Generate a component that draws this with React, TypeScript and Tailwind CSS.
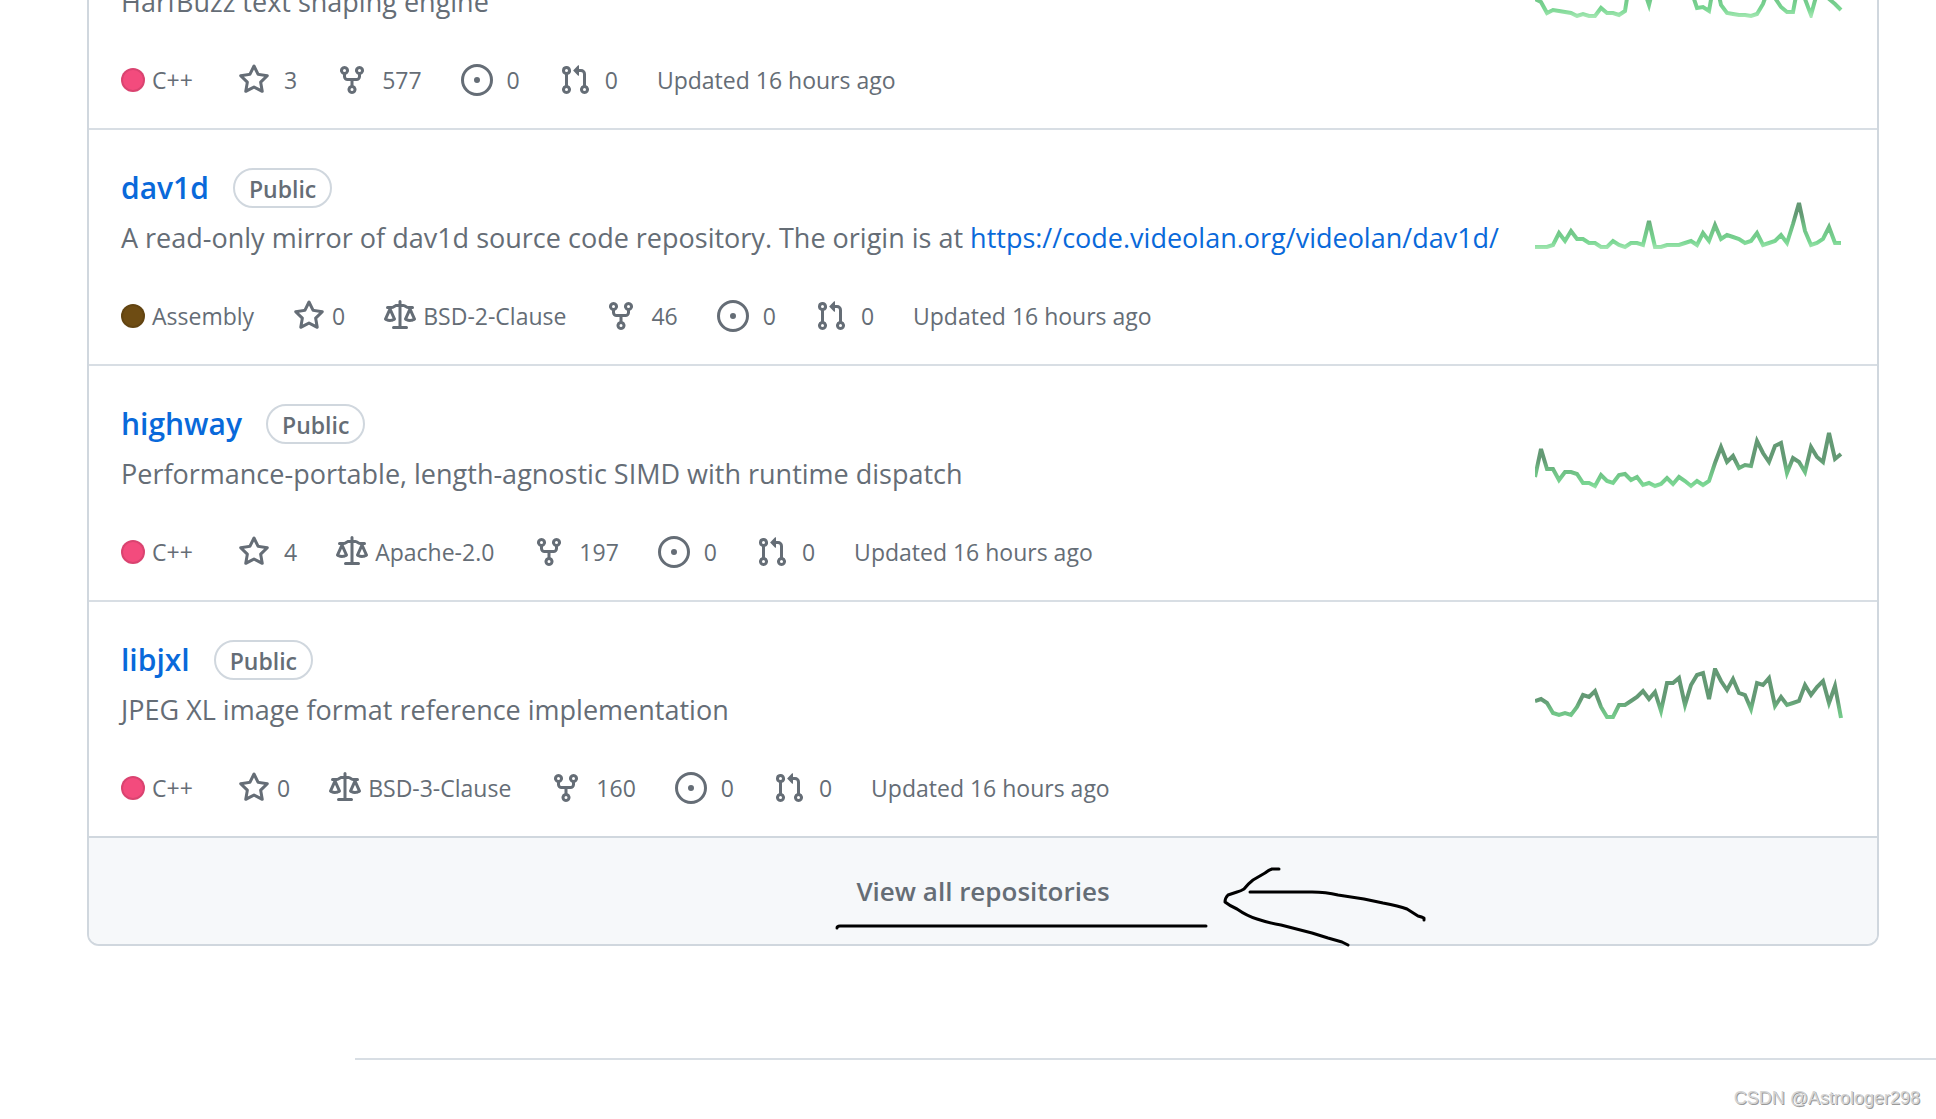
import { clsx } from "clsx";

type Repo = {
  name: string;
  description: string;
  link?: string;
  language: string;
  languageColor: string;
  stars: number;
  wideStars?: boolean;
  license?: string;
  forks: number;
  activity: number[];
  // top and bottom of the sparkline gradient
  shade: [number, number];
};

const repos: Repo[] = [
  {
    name: "harfbuzz",
    description: "HarfBuzz text shaping engine",
    language: "C++",
    languageColor: "bg-[#f34b7d]",
    stars: 3,
    wideStars: true,
    forks: 577,
    activity: [
      39, 42, 53, 50, 51, 52, 53, 56, 54, 56, 56, 48, 53, 53, 55, 51, 13, 20,
      27, 45, 20, 7, 13, 20, 13, 23, 30, 48, 47, 51, 17, 45, 53, 54, 55, 55, 56,
      54, 44, 27, 38, 47, 52, 52, 20, 39, 55, 33, 30, 39, 44, 50,
    ],
    shade: [14, 66],
  },
  {
    name: "dav1d",
    description:
      "A read-only mirror of dav1d source code repository. The origin is at ",
    link: "https://code.videolan.org/videolan/dav1d/",
    language: "Assembly",
    languageColor: "bg-[#6e4c13]",
    stars: 0,
    license: "BSD-2-Clause",
    forks: 46,
    activity: [
      51, 51, 51, 49, 37, 45, 35, 43, 43, 47, 47, 51, 51, 45, 49, 51, 47, 47,
      49, 25, 51, 51, 49, 49, 49, 47, 45, 49, 37, 45, 29, 43, 39, 41, 43, 47,
      45, 37, 49, 47, 45, 39, 47, 28, 7, 35, 49, 47, 43, 31, 47, 47,
    ],
    shade: [14, 61],
  },
  {
    name: "highway",
    description:
      "Performance-portable, length-agnostic SIMD with runtime dispatch",
    language: "C++",
    languageColor: "bg-[#f34b7d]",
    stars: 4,
    wideStars: true,
    license: "Apache-2.0",
    forks: 197,
    activity: [
      45, 17, 37, 37, 48, 40, 40, 42, 51, 51, 54, 43, 49, 51, 43, 42, 48, 45,
      53, 51, 54, 52, 46, 52, 45, 49, 54, 49, 53, 49, 31, 15, 30, 24, 36, 33,
      34, 9, 21, 30, 14, 11, 41, 26, 30, 40, 15, 25, 30, 1, 27, 22,
    ],
    shade: [24, 66],
  },
  {
    name: "libjxl",
    description: "JPEG XL image format reference implementation",
    language: "C++",
    languageColor: "bg-[#f34b7d]",
    stars: 0,
    license: "BSD-3-Clause",
    forks: 160,
    activity: [
      33, 31, 35, 45, 47, 45, 47, 39, 27, 29, 23, 39, 49, 49, 37, 37, 33, 29,
      23, 31, 24, 43, 15, 15, 10, 37, 17, 7, 5, 31, 1, 13, 22, 11, 25, 27, 41,
      15, 17, 10, 38, 29, 37, 35, 33, 17, 27, 19, 13, 35, 18, 50,
    ],
    shade: [28, 68],
  },
];

const icons = {
  star: "M8 .25a.75.75 0 01.673.418l1.882 3.815 4.21.612a.75.75 0 01.416 1.279l-3.046 2.97.719 4.192a.75.75 0 01-1.088.791L8 12.347l-3.766 1.98a.75.75 0 01-1.088-.79l.72-4.194L.818 6.374a.75.75 0 01.416-1.28l4.21-.611L7.327.668A.75.75 0 018 .25zm0 2.445L6.615 5.5a.75.75 0 01-.564.41l-3.097.45 2.24 2.184a.75.75 0 01.216.664l-.528 3.084 2.769-1.456a.75.75 0 01.698 0l2.77 1.456-.53-3.084a.75.75 0 01.216-.664l2.24-2.183-3.096-.45a.75.75 0 01-.564-.41L8 2.694v.001z",
  fork: "M5 3.25a.75.75 0 11-1.5 0 .75.75 0 011.5 0zm0 2.122a2.25 2.25 0 10-1.5 0v.878A2.25 2.25 0 005.75 8.5h1.5v2.128a2.251 2.251 0 101.5 0V8.5h1.5a2.25 2.25 0 002.25-2.25v-.878a2.25 2.25 0 10-1.5 0v.878a.75.75 0 01-.75.75h-4.5A.75.75 0 015 6.25v-.878zm3.75 7.378a.75.75 0 11-1.5 0 .75.75 0 011.5 0zm3-8.75a.75.75 0 100-1.5.75.75 0 000 1.5z",
  issue:
    "M8 9.5a1.5 1.5 0 100-3 1.5 1.5 0 000 3zM8 0a8 8 0 100 16A8 8 0 008 0zM1.5 8a6.5 6.5 0 1113 0 6.5 6.5 0 01-13 0z",
  pull: "M7.177 3.073L9.573.677A.25.25 0 0110 .854v4.792a.25.25 0 01-.427.177L7.177 3.427a.25.25 0 010-.354zM3.75 2.5a.75.75 0 100 1.5.75.75 0 000-1.5zm-2.25.75a2.25 2.25 0 113 2.122v5.256a2.251 2.251 0 11-1.5 0V5.372A2.25 2.25 0 011.5 3.25zM11 2.5h-1V4h1a1 1 0 011 1v5.628a2.251 2.251 0 101.5 0V5A2.5 2.5 0 0011 2.5zm1 10.25a.75.75 0 111.5 0 .75.75 0 01-1.5 0zM3.75 12a.75.75 0 100 1.5.75.75 0 000-1.5z",
  law: "M8.75.75a.75.75 0 00-1.5 0V2h-.984c-.305 0-.604.08-.869.23l-1.288.737A.25.25 0 013.984 3H1.75a.75.75 0 000 1.5h.428L.066 9.192a.75.75 0 00.154.838l.53-.53-.53.53v.001l.002.002.002.002.006.006.016.015.045.04a3.514 3.514 0 00.686.45A4.492 4.492 0 003 11c.88 0 1.556-.22 2.023-.454a3.515 3.515 0 00.686-.45l.045-.04.016-.015.006-.006.002-.002.001-.002L5.25 9.5l.53.53a.75.75 0 00.154-.838L3.822 4.5h.162c.305 0 .604-.08.869-.23l1.289-.737a.25.25 0 01.124-.033h.984V13h-2.5a.75.75 0 000 1.5h6.5a.75.75 0 000-1.5h-2.5V3.5h.984a.25.25 0 01.124.033l1.29.736c.264.152.563.231.868.231h.162l-2.112 4.692a.75.75 0 00.154.838l.53-.53-.53.53v.001l.002.002.002.002.006.006.016.015.045.04a3.517 3.517 0 00.686.45A4.492 4.492 0 0013 11c.88 0 1.556-.22 2.023-.454a3.512 3.512 0 00.686-.45l.045-.04.01-.01.006-.005.006-.006.002-.002.001-.002-.529-.531.53.53a.75.75 0 00.154-.838L13.823 4.5h.427a.75.75 0 000-1.5h-2.234a.25.25 0 01-.124-.033l-1.29-.736A1.75 1.75 0 009.735 2H8.75V.75zM1.695 9.227c.285.135.718.273 1.305.273s1.02-.138 1.305-.273L3 6.327l-1.305 2.9zm10 0c.285.135.718.273 1.305.273s1.02-.138 1.305-.273L13 6.327l-1.305 2.9z",
};

function Icon({ name }: { name: keyof typeof icons }) {
  return (
    <svg
      viewBox="0 0 16 16"
      className="w-8 h-8 shrink-0 fill-current"
      aria-hidden="true"
    >
      <path fillRule="evenodd" d={icons[name]} />
    </svg>
  );
}

function Sparkline({ repo }: { repo: Repo }) {
  const id = `activity-${repo.name}`;
  return (
    <svg
      viewBox="0 0 310 58"
      className="w-[310px] h-[58px] shrink-0 mt-8"
      role="img"
      aria-label={`Past year of activity for ${repo.name}`}
    >
      <defs>
        <linearGradient
          id={id}
          gradientUnits="userSpaceOnUse"
          x1="0"
          x2="0"
          y1={repo.shade[1]}
          y2={repo.shade[0]}
        >
          <stop offset="10%" stopColor="#9be9a8" />
          <stop offset="33%" stopColor="#40c463" />
          <stop offset="66%" stopColor="#30a14e" />
          <stop offset="90%" stopColor="#216e39" />
        </linearGradient>
      </defs>
      <polyline
        points={repo.activity.map((y, i) => `${i * 6},${y}`).join(" ")}
        fill="none"
        stroke={`url(#${id})`}
        strokeWidth="4"
        opacity="0.7"
      />
    </svg>
  );
}

function RepoRow({ repo }: { repo: Repo }) {
  return (
    <li className="flex items-start justify-between px-8 pt-[34px] pb-8 border-b-2 border-[#d8dee4] last:border-[#d0d7de]">
      <div className="min-w-0">
        <div className="flex items-center gap-6 h-12">
          <h3 className="text-[30px] leading-[48px] font-semibold">
            <a href="#" className="text-[#0969da] hover:underline">
              {repo.name}
            </a>
          </h3>
          <span className="h-10 px-[14px] border-2 border-[#d0d7de] rounded-full text-[23px] leading-[38px] font-semibold">
            Public
          </span>
        </div>
        <p className="mt-[5px] text-[27px] leading-[42px]">
          {repo.description}
          {repo.link && (
            <a href={repo.link} className="text-[#0969da] hover:underline">
              {repo.link}
            </a>
          )}
        </p>
        <div className="flex items-center gap-[39px] h-8 mt-[41px] text-[23px] leading-8">
          <span className="flex items-center gap-[7px]">
            <span
              className={clsx(
                "w-6 h-6 rounded-full border-2 border-black/10",
                repo.languageColor,
              )}
            />
            <span className="min-w-[47px]">{repo.language}</span>
          </span>
          <a
            href="#"
            className={clsx(
              "flex items-center hover:text-[#0969da]",
              repo.wideStars ? "gap-[14px]" : "gap-[7px]",
            )}
          >
            <Icon name="star" />
            {repo.stars}
          </a>
          {repo.license && (
            <span className="flex items-center gap-[7px]">
              <Icon name="law" />
              {repo.license}
            </span>
          )}
          <a
            href="#"
            className="flex items-center gap-[14px] hover:text-[#0969da]"
          >
            <Icon name="fork" />
            {repo.forks}
          </a>
          <a
            href="#"
            className="flex items-center gap-[14px] hover:text-[#0969da]"
          >
            <Icon name="issue" />0
          </a>
          <a
            href="#"
            className="flex items-center gap-[14px] hover:text-[#0969da]"
          >
            <Icon name="pull" />0
          </a>
          <span>Updated 16 hours ago</span>
        </div>
      </div>
      <Sparkline repo={repo} />
    </li>
  );
}

// Hand-drawn underline and arrow over the footer link
function PenMarks() {
  return (
    <svg
      viewBox="0 0 600 90"
      className="absolute left-1/2 top-[21px] -ml-[153px] w-[600px] h-[90px] pointer-events-none"
      fill="none"
      stroke="#000"
      strokeWidth="3"
      strokeLinecap="round"
      strokeLinejoin="round"
      aria-hidden="true"
    >
      <path d="M7 69Q7 67 10 67H376" />
      <path d="M449 10L442 10Q439 11 435 14L423 21Q419 24 414 30Q411 32 407 33L398 36Q395 39 395 43Q400 47 407 50Q417 57 427 60Q439 64 451 66L482 74L498 79L512 83L518 86" />
      <path d="M420 33H482Q496 33 508 36L534 40L553 44Q569 47 577 50L588 57Q592 58 594 59V61" />
    </svg>
  );
}

export default function App() {
  return (
    <main
      className="flex flex-col overflow-hidden bg-white text-[#656d76]"
      style={{ fontFamily: '"Open Sans", "Noto Sans", sans-serif' }}
    >
      <section className="-mt-[108px] ml-[87px] mr-[57px] border-2 border-[#d0d7de] rounded-xl">
        <ul>
          {repos.map((repo) => (
            <RepoRow key={repo.name} repo={repo} />
          ))}
        </ul>
        <div className="relative py-8 text-center bg-[#f6f8fa] rounded-b-[10px]">
          <a
            href="#"
            className="text-[26px] leading-[42px] font-semibold hover:text-[#0969da]"
          >
            View all repositories
          </a>
          <PenMarks />
        </div>
      </section>

      <hr className="mt-28 ml-[355px] border-t-2 border-[#d8dee4]" />

      <p
        className="mt-6 mr-4 mb-1 text-right text-lg leading-7 text-[#d4d4d4] [text-shadow:1px_1px_0_#9a9a9a]"
        style={{ fontFamily: '"Liberation Sans", Arial, sans-serif' }}
      >
        CSDN @Astrologer298
      </p>
    </main>
  );
}
